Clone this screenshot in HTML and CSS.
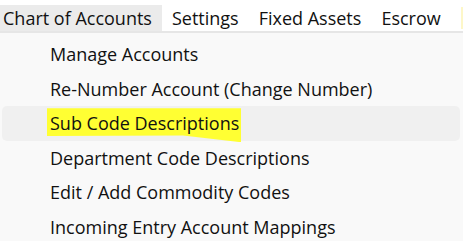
FILE: index.html
```html
<!DOCTYPE html>
<html lang="en">
<head>
    <meta charset="UTF-8">
    <title>Chart of Accounts</title>
    <link rel="stylesheet" href="styles.css">
</head>
<body>
    <div class="menubar">
        <div class="menu-item active">Chart of Accounts</div>
        <div class="menu-item">Settings</div>
        <div class="menu-item">Fixed Assets</div>
        <div class="menu-item">Escrow</div>
        <div class="menu-item cut"></div>
    </div>
    <div class="dropdown">
        <div class="entry">Manage Accounts</div>
        <div class="entry">Re-Number Account (Change Number)</div>
        <div class="entry hover"><span class="marker">Sub Code Descriptions</span></div>
        <div class="entry">Department Code Descriptions</div>
        <div class="entry">Edit / Add Commodity Codes</div>
        <div class="entry">Incoming Entry Account Mappings</div>
    </div>
</body>
</html>
```

FILE: styles.css
```css
body {
    margin: 0;
    background: #ffffff;
    font-family: "Open Sans", "Noto Sans", sans-serif;
    font-size: 18px;
    color: #111111;
}
.menubar {
    display: flex;
    width: 463px;
    padding-top: 5px;
    height: 26px;
    border-bottom: 2px solid #e6e6e6;
}
.menu-item {
    line-height: 26px;
    padding: 0 10px;
    white-space: nowrap;
}
.menu-item.active {
    background: #ebebeb;
    padding-left: 3px;
    padding-right: 10px;
}
.menu-item.cut {
    margin-left: auto;
    padding: 0;
    width: 2px;
    height: 22px;
    margin-top: 2px;
    background: #fdf7c8;
}
.dropdown {
    width: 458px;
    background: #f9f9f9;
    padding: 4px 3px 2px 2px;
}
.entry {
    height: 34.6px;
    line-height: 34.6px;
    padding-left: 48px;
    border-radius: 5px;
    white-space: nowrap;
}
.entry.hover {
    background: #f0f0f0;
}
.marker {
    background: #ffff33;
    padding: 3px 2px 7px 3px;
    margin-left: -3px;
    clip-path: polygon(0 0, 100% 0, 100% 100%, 70% 80%, 0 82%);
}
```
